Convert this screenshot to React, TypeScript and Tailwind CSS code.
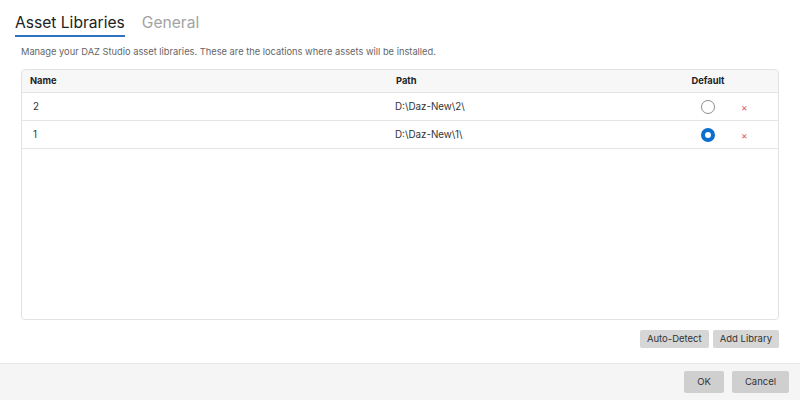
import { useState } from "react";

const font = { fontFamily: "Inter, 'Noto Sans', sans-serif" };

export default function App() {
  const [libraries] = useState([
    { name: "2", path: "D:\\Daz-New\\2\\" },
    { name: "1", path: "D:\\Daz-New\\1\\" },
  ]);
  const [defaultLib, setDefaultLib] = useState("1");

  return (
    <div className="flex h-[400px] w-[800px] flex-col bg-white text-[#222]" style={font}>
      {/* Tabs */}
      <div className="flex-1">
        <div className="flex gap-[17px] px-[15px] pt-[13px]">
          <div className="border-b-[2px] border-[#2e72c4] pb-[2px] text-[15.6px] leading-[20px] text-[#222]">
            Asset Libraries
          </div>
          <div className="pb-[2px] text-[15.6px] leading-[20px] text-[#a3a3a3]">General</div>
        </div>

        <div className="px-[21px]">
          <p className="mt-[9px] text-[9.3px] leading-[12px] text-[#666]">
            Manage your DAZ Studio asset libraries. These are the locations where assets will be installed.
          </p>

          {/* Table */}
          <div className="mt-[11px] h-[251px] rounded-[4px] border border-[#e2e2e2]">
            <div className="grid h-[23px] grid-cols-[365px_296px_50px_1fr] items-center rounded-t-[4px] border-b border-[#e4e4e4] bg-[#f7f7f7] text-[9.3px] font-bold text-[#222]">
              <div className="pl-[8px]">Name</div>
              <div className="pl-[9px]">Path</div>
              <div className="text-center">Default</div>
              <div />
            </div>
            {libraries.map((lib) => (
              <div
                key={lib.name}
                className="grid h-[28px] grid-cols-[365px_296px_50px_1fr] items-center border-b border-[#e4e4e4] pt-[1px] text-[9.8px] text-[#333]"
              >
                <div className="pl-[11px]">{lib.name}</div>
                <div className="pl-[8px]">{lib.path}</div>
                <div className="flex justify-center">
                  <button
                    onClick={() => setDefaultLib(lib.name)}
                    className={
                      defaultLib === lib.name
                        ? "h-[14px] w-[14px] rounded-full border-[4px] border-[#0b6fd0] bg-white"
                        : "h-[14px] w-[14px] rounded-full border border-[#8c8c8c] bg-white"
                    }
                  />
                </div>
                <div className="pl-[8px] text-[10px] leading-none text-[#e0566a]">×</div>
              </div>
            ))}
          </div>

          <div className="mt-[10px] flex justify-end gap-[4px]">
            <button className="h-[18px] rounded-[2px] bg-[#d6d6d6] px-[7px] text-[9.5px] text-[#333]">
              Auto-Detect
            </button>
            <button className="h-[18px] rounded-[2px] bg-[#d6d6d6] px-[7px] text-[9.5px] text-[#333]">
              Add Library
            </button>
          </div>
        </div>
      </div>

      {/* Footer */}
      <div className="flex h-[37px] items-center justify-end gap-[8px] border-t border-[#e6e6e6] bg-[#f5f5f5] pr-[11px]">
        <button className="h-[22px] w-[40px] rounded-[2px] bg-[#cfcfcf] text-[9.5px] text-[#333]">OK</button>
        <button className="h-[22px] w-[57px] rounded-[2px] bg-[#cfcfcf] text-[9.5px] text-[#333]">Cancel</button>
      </div>
    </div>
  );
}
